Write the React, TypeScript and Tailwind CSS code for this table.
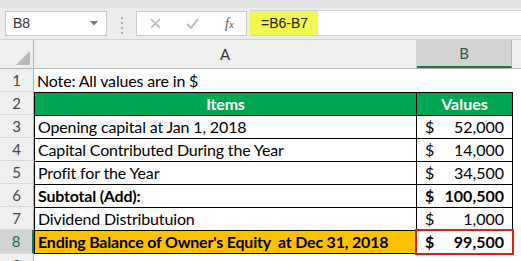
import React from "react";

const cellFont = { fontFamily: "Lato, 'Open Sans', sans-serif" };

type Row = { n: number; a: string; b?: string; kind?: "green" | "bold" | "orange" | "plain" | "note" | "empty" };

const rows: Row[] = [
  { n: 1, a: "Note: All values are in $", kind: "note" },
  { n: 2, a: "Items", b: "Values", kind: "green" },
  { n: 3, a: "Opening capital at Jan 1, 2018", b: "52,000", kind: "plain" },
  { n: 4, a: "Capital Contributed During the Year", b: "14,000", kind: "plain" },
  { n: 5, a: "Profit for the Year", b: "34,500", kind: "plain" },
  { n: 6, a: "Subtotal (Add):", b: "100,500", kind: "bold" },
  { n: 7, a: "Dividend Distributuion", b: "1,000", kind: "plain" },
  { n: 8, a: "Ending Balance of Owner's Equity  at Dec 31, 2018", b: "99,500", kind: "orange" },
];

function RowHeader({ n, selected, h }: { n: number | string; selected?: boolean; h: string }) {
  return (
    <div
      className={`w-[34px] shrink-0 ${h} flex items-center justify-center border-b border-[#d8d8d8] text-[15px] ${
        selected
          ? "bg-[#d3d3d3] text-[#1e6b3e] border-r-2 border-r-[#217346]"
          : "bg-[#efefef] text-[#444] border-r border-r-[#b5b5b5]"
      }`}
      style={cellFont}
    >
      {n}
    </div>
  );
}

export default function App() {
  return (
    <div className="w-[521px] h-[261px] overflow-hidden bg-white relative" style={{ fontFamily: "'Liberation Sans', Arial, sans-serif" }}>
      {/* Formula bar */}
      <div className="h-[40px] bg-[#ededed] border-b border-[#d0d0d0] relative">
        <div className="h-[8px] bg-[#e3e3e3]" />
        <div className="flex items-start">
          {/* Name box */}
          <div className="ml-[5px] mt-[3px] w-[102px] h-[25px] bg-white border border-[#c8c8c8] flex items-center justify-between pl-[7px] pr-[8px]">
            <span className="text-[14px] text-[#333]">B8</span>
            <svg width="8" height="5" viewBox="0 0 8 5"><path d="M0 0 L8 0 L4 4.5 Z" fill="#777" /></svg>
          </div>
          {/* separator dots */}
          <div className="ml-[14px] mt-[9px] flex flex-col gap-[3px]">
            <div className="w-[2px] h-[2px] bg-[#aaa]" />
            <div className="w-[2px] h-[2px] bg-[#aaa]" />
            <div className="w-[2px] h-[2px] bg-[#aaa]" />
            <div className="w-[2px] h-[2px] bg-[#aaa]" />
          </div>
          {/* X / check / fx box */}
          <div className="ml-[13px] mt-[3px] w-[111px] h-[25px] bg-white border border-[#c8c8c8] flex items-center">
            <svg className="ml-[13px]" width="11" height="11" viewBox="0 0 11 11">
              <path d="M1 1 L10 10 M10 1 L1 10" stroke="#b8b8b8" strokeWidth="1.6" />
            </svg>
            <svg className="ml-[25px]" width="13" height="11" viewBox="0 0 13 11">
              <path d="M1 6 L5 10 L12 1" stroke="#b8b8b8" strokeWidth="1.8" fill="none" />
            </svg>
            <span className="ml-[26px] text-[14px] italic text-[#555]" style={{ fontFamily: "'Liberation Serif', serif" }}>
              f<span className="text-[11px]">x</span>
            </span>
          </div>
          {/* formula input */}
          <div className="ml-[3px] mt-[2px] flex-1 h-[26px] bg-white border-y border-[#d0d0d0] flex">
            <div className="w-[68px] h-full bg-[#f2f74e] flex items-center pl-[11px] text-[14px] text-[#222]">=B6-B7</div>
          </div>
        </div>
      </div>

      {/* Column headers */}
      <div className="flex h-[29px] bg-[#efefef] border-b border-[#b5b5b5]">
        <div className="w-[34px] shrink-0 h-full border-r border-[#b5b5b5] relative">
          <svg className="absolute right-[3px] bottom-[3px]" width="14" height="14" viewBox="0 0 14 14">
            <path d="M14 0 L14 14 L0 14 Z" fill="#b9b9b9" />
          </svg>
        </div>
        <div className="w-[383px] shrink-0 h-full border-r border-[#d0d0d0] flex items-center justify-center text-[15px] text-[#333]" style={cellFont}>
          A
        </div>
        <div className="w-[95px] shrink-0 h-full bg-[#d3d3d3] border-b-2 border-[#217346] border-r border-r-[#b5b5b5] flex items-center justify-center text-[15px] text-[#2a5a44]" style={cellFont}>
          B
        </div>
        <div className="flex-1" />
      </div>

      {/* Rows */}
      {rows.map((r) => {
        const isTable = r.kind !== "note";
        const last = r.n === 8;
        const hRow = last ? "h-[24px]" : "h-[23px]";
        const aBg = r.kind === "green" ? "bg-[#00a651]" : r.kind === "orange" ? "bg-[#ffc000]" : "bg-white";
        const bBg = r.kind === "green" ? "bg-[#00a651]" : "bg-white";
        const bold = r.kind === "green" || r.kind === "bold" || r.kind === "orange";
        const textColor = r.kind === "green" ? "text-white" : "text-black";
        return (
          <div key={r.n} className={`flex ${hRow}`}>
            <RowHeader n={r.n} selected={r.n === 8} h="h-full" />
            <div
              className={`w-[383px] shrink-0 h-full ${aBg} ${isTable ? "border-t border-l border-r border-black" : ""} ${last ? "border-b" : ""} flex items-center ${
                r.kind === "green" ? "justify-center" : "pl-[3px]"
              } text-[16px] ${textColor} ${bold ? "font-bold tracking-[-0.2px]" : "tracking-[-0.15px]"} whitespace-pre`}
              style={cellFont}
            >
              {r.a}
            </div>
            <div
              className={`w-[96px] shrink-0 h-full ${bBg} ${isTable ? "border-t border-r border-black" : ""} ${last ? "border-b" : ""} flex items-center text-[16px] ${textColor} ${
                bold ? "font-bold" : ""
              } ${r.kind === "green" ? "justify-center" : "justify-between pl-[8px] pr-[8px]"} relative`}
              style={cellFont}
            >
              {r.kind === "green" ? (
                r.b
              ) : r.b ? (
                <>
                  <span>$</span>
                  <span>{r.b}</span>
                </>
              ) : null}
              {last && <div className="absolute -left-[2px] -top-[2px] -right-[2px] -bottom-[2px] border-2 border-[#e0201c]" />}
            </div>
            <div className="flex-1" />
          </div>
        );
      })}
      <div className="flex h-[23px]">
        <RowHeader n={9} h="h-full" />
        <div className="flex-1" />
      </div>
    </div>
  );
}
